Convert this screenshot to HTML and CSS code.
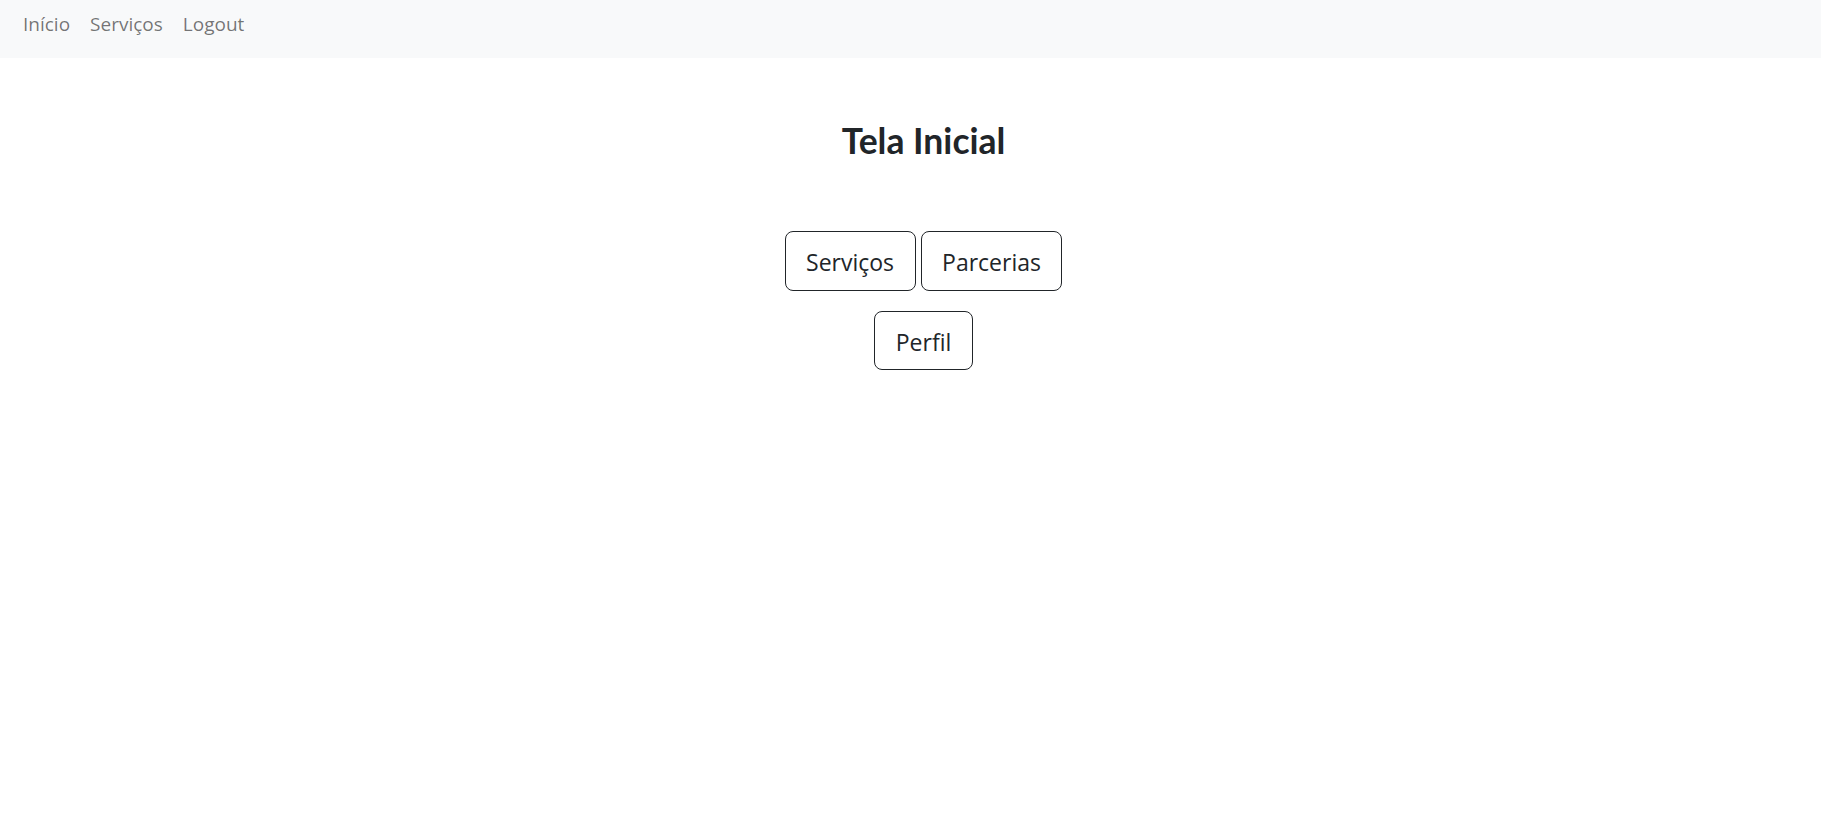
FILE: index.html
```html
<!DOCTYPE html>
<html lang="pt-BR">
<head>
<meta charset="utf-8">
<title>Tela Inicial</title>
<link rel="stylesheet" href="styles.css">
</head>
<body>
<nav class="navbar">
  <a class="nav-link" href="#">Início</a>
  <a class="nav-link" href="#">Serviços</a>
  <a class="nav-link" href="#">Logout</a>
</nav>
<main class="main">
  <h2 class="title">Tela Inicial</h2>
  <div class="actions">
    <div class="action-row">
      <button class="btn">Serviços</button>
      <button class="btn">Parcerias</button>
    </div>
    <div class="action-row">
      <button class="btn">Perfil</button>
    </div>
  </div>
</main>
</body>
</html>
```

FILE: styles.css
```css
* { box-sizing: border-box; }
html, body {
  margin: 0;
  padding: 0;
  background: #ffffff;
  font-family: "Open Sans", "Noto Sans", "Liberation Sans", sans-serif;
  color: #212529;
}
.navbar {
  height: 58px;
  background: #f8f9fa;
  display: flex;
  align-items: flex-start;
  padding: 9px 13px 0;
}
.nav-link {
  padding: 0 10px;
  font-size: 19px;
  color: rgba(0, 0, 0, 0.55);
  text-decoration: none;
  line-height: 30px;
}
.main {
  padding-left: 26px;
  text-align: center;
}
.title {
  margin: 59px 0 0;
  font-family: "Lato", "Open Sans", sans-serif;
  font-size: 35.5px;
  font-weight: 700;
  line-height: 48px;
  color: #212529;
}
.actions {
  margin-top: 66px;
  display: flex;
  flex-direction: column;
  align-items: center;
  gap: 20px;
}
.action-row {
  display: flex;
  justify-content: center;
  gap: 5px;
}
.btn {
  font-family: inherit;
  font-size: 23px;
  line-height: 37.5px;
  padding: 12px 20.5px 8px;
  color: #212529;
  background: #ffffff;
  border: 1.25px solid #212529;
  border-radius: 8px;
  cursor: pointer;
}
```
